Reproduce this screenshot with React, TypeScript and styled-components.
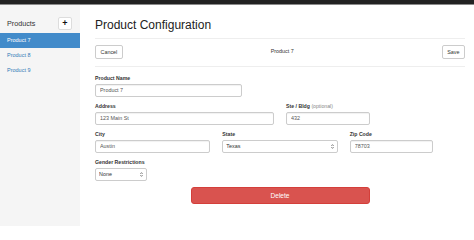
import React from "react";
import styled, { createGlobalStyle } from "styled-components";

const GlobalStyle = createGlobalStyle`
  html, body {
    margin: 0;
    padding: 0;
    background: #fff;
  }
  body {
    font-family: "Liberation Sans", Helvetica, Arial, sans-serif;
    color: #333;
  }
  * {
    box-sizing: border-box;
  }
`;

const Page = styled.div`
  width: 474px;
  height: 226px;
  display: flex;
  flex-direction: column;
  overflow: hidden;
`;

const TopBar = styled.div`
  height: 5px;
  flex: none;
  background: #222;
  border-bottom: 1px solid #8a8a8a;
`;

const Body = styled.div`
  flex: 1;
  display: flex;
  min-height: 0;
`;

const Sidebar = styled.aside`
  width: 80px;
  flex: none;
  background: #f5f5f5;
  display: flex;
  flex-direction: column;
`;

const SidebarHeader = styled.div`
  display: flex;
  align-items: center;
  justify-content: space-between;
  padding: 12px 8px 3px 7px;
`;

const SidebarTitle = styled.span`
  font-size: 7.2px;
  line-height: 13px;
`;

const AddButton = styled.button`
  width: 14px;
  height: 13px;
  padding: 0;
  display: flex;
  align-items: center;
  justify-content: center;
  background: #fff;
  border: 1px solid #ddd;
  border-radius: 2px;
  font-family: "Liberation Sans", Arial, sans-serif;
  font-size: 9px;
  font-weight: bold;
  line-height: 1;
  color: #111;
`;

const NavItem = styled.div<{ $active?: boolean }>`
  height: 15px;
  line-height: 15px;
  padding-left: 7px;
  font-size: 5.5px;
  color: ${(p) => (p.$active ? "#fff" : "#337ab7")};
  background: ${(p) => (p.$active ? "#428bca" : "transparent")};
`;

const Main = styled.main`
  flex: 1;
  padding: 14px 9px 0 15px;
  min-width: 0;
`;

const Title = styled.h1`
  margin: 0;
  padding-bottom: 6px;
  font-size: 12px;
  line-height: 13.2px;
  font-weight: normal;
  color: #222;
  border-bottom: 1px solid #eee;
`;

const Toolbar = styled.div`
  display: flex;
  align-items: flex-start;
  padding: 6px 0 7px;
  border-bottom: 1px solid #eee;
`;

const ToolbarLabel = styled.div`
  flex: 1;
  text-align: center;
  font-size: 5.4px;
  line-height: 8px;
  padding-top: 1.4px;
  color: #333;
`;

const Button = styled.button`
  height: 14px;
  padding: 0 4.5px;
  background: #fff;
  border: 1px solid #ccc;
  border-radius: 2px;
  font-family: "Liberation Sans", Arial, sans-serif;
  font-size: 5.4px;
  color: #333;
  line-height: 1;
`;

const Form = styled.form`
  padding-top: 7.3px;
`;

const Row = styled.div`
  display: grid;
  grid-template-columns: repeat(12, 1fr);
  column-gap: 12px;
`;

const Group = styled.div<{ $span: number; $start?: number }>`
  grid-column: ${(p) => (p.$start ? `${p.$start} / span ${p.$span}` : `span ${p.$span}`)};
  margin-bottom: 6px;
  display: flex;
  flex-direction: column;
`;

const Label = styled.label`
  font-size: 5.2px;
  line-height: 7px;
  font-weight: bold;
  margin-bottom: 2px;
  color: #333;
  white-space: nowrap;
`;

const Hint = styled.span`
  font-weight: normal;
  color: #888;
`;

const Input = styled.input`
  display: block;
  height: 13px;
  width: 100%;
  padding: 0 4px;
  border: 1px solid #ccc;
  border-radius: 2px;
  box-shadow: inset 0 1px 1px rgba(0, 0, 0, 0.06);
  font-family: "Liberation Sans", Arial, sans-serif;
  font-size: 5.4px;
  color: #555;
  background: #fff;
  outline: none;
`;

const SelectWrap = styled.div`
  position: relative;
  height: 13px;
`;

const Select = styled.select`
  display: block;
  appearance: none;
  -webkit-appearance: none;
  width: 100%;
  height: 13px;
  margin: 0;
  padding: 0 8px 0 3px;
  border: 1px solid #ccc;
  border-radius: 2px;
  font-family: "Liberation Sans", Arial, sans-serif;
  font-size: 5.4px;
  color: #333;
  background: #fff;
  outline: none;
`;

const Arrows = styled.svg`
  position: absolute;
  right: 3.5px;
  top: 4px;
  width: 3px;
  height: 5px;
  pointer-events: none;
`;

const DeleteButton = styled.button`
  display: block;
  height: 17.5px;
  width: 100%;
  background: #d9534f;
  border: 1px solid #d43f3a;
  border-radius: 3px;
  font-family: "Liberation Sans", Arial, sans-serif;
  font-size: 6.6px;
  color: #fff;
`;

function SelectBox({ value, options }: { value: string; options: string[] }) {
  return (
    <SelectWrap>
      <Select defaultValue={value}>
        {options.map((o) => (
          <option key={o}>{o}</option>
        ))}
      </Select>
      <Arrows viewBox="0 0 3 5">
        <path d="M0.3 2 L1.5 0.6 L2.7 2" fill="none" stroke="#444" strokeWidth="0.6" />
        <path d="M0.3 3 L1.5 4.4 L2.7 3" fill="none" stroke="#444" strokeWidth="0.6" />
      </Arrows>
    </SelectWrap>
  );
}

const products = ["Product 7", "Product 8", "Product 9"];

export default function App() {
  return (
    <Page>
      <GlobalStyle />
      <TopBar />
      <Body>
        <Sidebar>
          <SidebarHeader>
            <SidebarTitle>Products</SidebarTitle>
            <AddButton type="button">+</AddButton>
          </SidebarHeader>
          {products.map((p, i) => (
            <NavItem key={p} $active={i === 0}>
              {p}
            </NavItem>
          ))}
        </Sidebar>
        <Main>
          <Title>Product Configuration</Title>
          <Toolbar>
            <Button type="button">Cancel</Button>
            <ToolbarLabel>Product 7</ToolbarLabel>
            <Button type="button">Save</Button>
          </Toolbar>
          <Form onSubmit={(e) => e.preventDefault()}>
            <Row>
              <Group $span={5}>
                <Label>Product Name</Label>
                <Input defaultValue="Product 7" />
              </Group>
            </Row>
            <Row>
              <Group $span={6}>
                <Label>Address</Label>
                <Input defaultValue="123 Main St" />
              </Group>
              <Group $span={3}>
                <Label>
                  Ste / Bldg <Hint>(optional)</Hint>
                </Label>
                <Input defaultValue="432" />
              </Group>
            </Row>
            <Row>
              <Group $span={4}>
                <Label>City</Label>
                <Input defaultValue="Austin" />
              </Group>
              <Group $span={4}>
                <Label>State</Label>
                <SelectBox value="Texas" options={["Texas", "California", "New York"]} />
              </Group>
              <Group $span={3}>
                <Label>Zip Code</Label>
                <Input defaultValue="78703" />
              </Group>
            </Row>
            <Row>
              <Group $span={2}>
                <Label>Gender Restrictions</Label>
                <SelectBox value="None" options={["None", "Male", "Female"]} />
              </Group>
            </Row>
            <Row>
              <Group $span={6} $start={4}>
                <DeleteButton type="button">Delete</DeleteButton>
              </Group>
            </Row>
          </Form>
        </Main>
      </Body>
    </Page>
  );
}
